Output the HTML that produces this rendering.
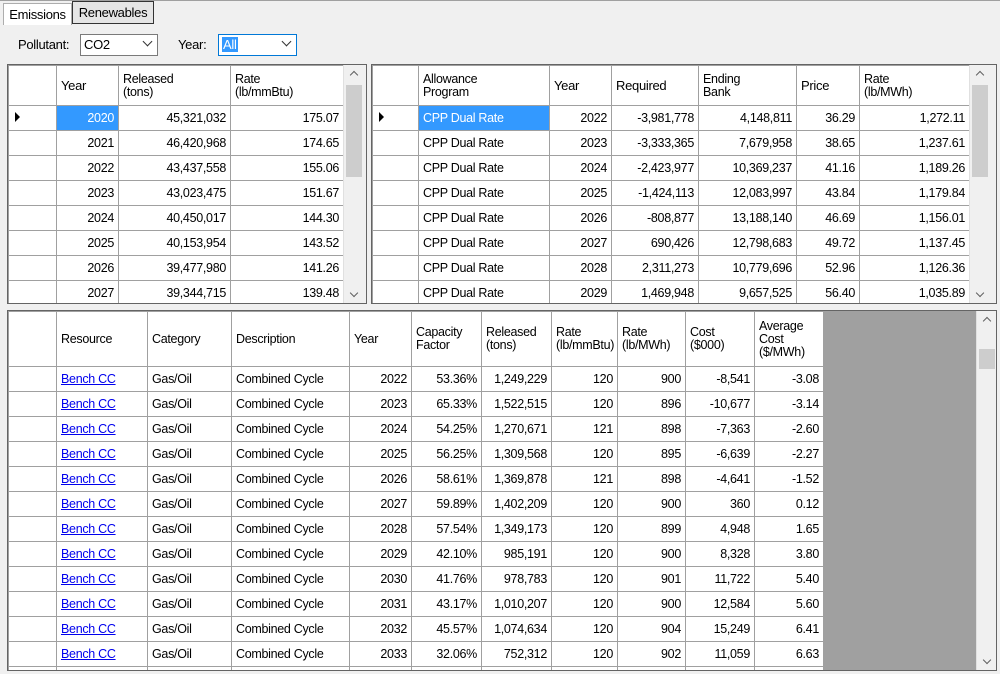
<!DOCTYPE html>
<html><head><style>
body{margin:0;width:1000px;height:674px;background:#f0f0f0;font-family:"Liberation Sans",sans-serif;font-size:12.5px;color:#000;position:relative;overflow:hidden;letter-spacing:-0.3px}
.abs{position:absolute}
.grid{position:absolute;border:1px solid #646464;background:#a0a0a0;overflow:hidden;box-sizing:border-box}
table{border-collapse:collapse;table-layout:fixed;background:#fff;position:absolute;left:0;top:0}
td{border:1px solid #a0a0a0;height:24px;padding:0 4px;white-space:nowrap;overflow:hidden;text-align:right}
td.l{text-align:left}
tr.h td{text-align:left;vertical-align:middle;line-height:13px}
td.rh{border-right:1px solid #a0a0a0;text-align:left}
.sel{background:#3399ff;color:#fff}
.sb{position:absolute;top:0;bottom:0;background:#f0f0f0;border-left:1px solid #e0e0e0}
.thumb{position:absolute;left:2px;width:16px;background:#cdcdcd}
.up,.dn{position:absolute;left:7px;width:5px;height:5px;border-left:1.5px solid #606060;border-top:1.5px solid #606060}
.up{top:7px;transform:rotate(45deg)}
.dn{bottom:7px;transform:rotate(225deg)}
a{color:#0000ee;text-decoration:underline}
.tri{display:inline-block;width:0;height:0;border-left:5px solid #000;border-top:5px solid transparent;border-bottom:5px solid transparent;margin-left:2px}
.combo{position:absolute;height:22px;background:#fff;border:1px solid #7a7a7a;box-sizing:border-box;font-size:13px;line-height:20px;padding-left:3px}
.combo .dd{position:absolute;right:6px;top:3px;width:6px;height:6px;border-right:1.5px solid #333;border-bottom:1.5px solid #333;transform:rotate(45deg)}
</style></head><body>
<div class="abs" style="left:0;top:0;width:1000px;height:1px;background:#a0a0a0"></div>
<div class="abs" style="left:3px;top:3px;width:67px;height:21px;background:#fff;border:1px solid #adadad;border-bottom:none;font-size:13px;line-height:21px;text-align:center">Emissions</div>
<div class="abs" style="left:72px;top:1px;width:80px;height:21px;background:#e5e5e5;border:1px solid #333;font-size:13px;line-height:21px;text-align:center">Renewables</div>
<div class="abs" style="left:18px;top:37px;font-size:13px">Pollutant:</div>
<div class="combo" style="left:80px;top:34px;width:78px">CO2<div class="dd"></div></div>
<div class="abs" style="left:178px;top:37px;font-size:13px">Year:</div>
<div class="combo" style="left:218px;top:34px;width:79px;border-color:#0078d7"><span style="background:#3399ff;color:#fff;padding:0 1px">All</span><div class="dd"></div></div>

<!-- top-left grid -->
<div class="grid" style="left:7px;top:64px;width:360px;height:240px">
<table style="width:335px">
<colgroup><col style="width:48px"><col style="width:62px"><col style="width:112px"><col style="width:113px"></colgroup>
<tr class="h" style="height:40px"><td></td><td style="font-size:13px">Year</td><td>Released<br>(tons)</td><td>Rate<br>(lb/mmBtu)</td></tr>
<tr><td class="rh"><span class="tri"></span></td><td class="sel">2020</td><td>45,321,032</td><td>175.07</td></tr>
<tr><td></td><td>2021</td><td>46,420,968</td><td>174.65</td></tr>
<tr><td></td><td>2022</td><td>43,437,558</td><td>155.06</td></tr>
<tr><td></td><td>2023</td><td>43,023,475</td><td>151.67</td></tr>
<tr><td></td><td>2024</td><td>40,450,017</td><td>144.30</td></tr>
<tr><td></td><td>2025</td><td>40,153,954</td><td>143.52</td></tr>
<tr><td></td><td>2026</td><td>39,477,980</td><td>141.26</td></tr>
<tr><td></td><td>2027</td><td>39,344,715</td><td>139.48</td></tr>
</table>
<div class="sb" style="left:335px;width:24px"><div class="up"></div><div class="thumb" style="top:20px;height:92px"></div><div class="dn"></div></div>
</div>

<!-- top-right grid -->
<div class="grid" style="left:371px;top:64px;width:626px;height:240px">
<table style="width:597px">
<colgroup><col style="width:46px"><col style="width:131px"><col style="width:62px"><col style="width:87px"><col style="width:98px"><col style="width:63px"><col style="width:110px"></colgroup>
<tr class="h" style="height:40px"><td></td><td>Allowance<br>Program</td><td style="font-size:13px">Year</td><td style="font-size:13px">Required</td><td>Ending<br>Bank</td><td style="font-size:13px">Price</td><td>Rate<br>(lb/MWh)</td></tr>
<tr><td class="rh"><span class="tri"></span></td><td class="l sel">CPP Dual Rate</td><td>2022</td><td>-3,981,778</td><td>4,148,811</td><td>36.29</td><td>1,272.11</td></tr>
<tr><td></td><td class="l">CPP Dual Rate</td><td>2023</td><td>-3,333,365</td><td>7,679,958</td><td>38.65</td><td>1,237.61</td></tr>
<tr><td></td><td class="l">CPP Dual Rate</td><td>2024</td><td>-2,423,977</td><td>10,369,237</td><td>41.16</td><td>1,189.26</td></tr>
<tr><td></td><td class="l">CPP Dual Rate</td><td>2025</td><td>-1,424,113</td><td>12,083,997</td><td>43.84</td><td>1,179.84</td></tr>
<tr><td></td><td class="l">CPP Dual Rate</td><td>2026</td><td>-808,877</td><td>13,188,140</td><td>46.69</td><td>1,156.01</td></tr>
<tr><td></td><td class="l">CPP Dual Rate</td><td>2027</td><td>690,426</td><td>12,798,683</td><td>49.72</td><td>1,137.45</td></tr>
<tr><td></td><td class="l">CPP Dual Rate</td><td>2028</td><td>2,311,273</td><td>10,779,696</td><td>52.96</td><td>1,126.36</td></tr>
<tr><td></td><td class="l">CPP Dual Rate</td><td>2029</td><td>1,469,948</td><td>9,657,525</td><td>56.40</td><td>1,035.89</td></tr>
</table>
<div class="sb" style="left:597px;width:28px"><div class="up"></div><div class="thumb" style="top:20px;height:92px"></div><div class="dn"></div></div>
</div>

<!-- bottom grid -->
<div class="grid" style="left:7px;top:310px;width:990px;height:361px">
<table style="width:815px">
<colgroup><col style="width:48px"><col style="width:91px"><col style="width:84px"><col style="width:118px"><col style="width:62px"><col style="width:70px"><col style="width:70px"><col style="width:66px"><col style="width:68px"><col style="width:69px"><col style="width:69px"></colgroup>
<tr class="h" style="height:55px"><td></td><td>Resource</td><td>Category</td><td>Description</td><td>Year</td><td>Capacity<br>Factor</td><td>Released<br>(tons)</td><td>Rate<br>(lb/mmBtu)</td><td>Rate<br>(lb/MWh)</td><td>Cost<br>($000)</td><td>Average<br>Cost<br>($/MWh)</td></tr>
<tr><td></td><td class="l"><a>Bench CC</a></td><td class="l">Gas/Oil</td><td class="l">Combined Cycle</td><td>2022</td><td>53.36%</td><td>1,249,229</td><td>120</td><td>900</td><td>-8,541</td><td>-3.08</td></tr>
<tr><td></td><td class="l"><a>Bench CC</a></td><td class="l">Gas/Oil</td><td class="l">Combined Cycle</td><td>2023</td><td>65.33%</td><td>1,522,515</td><td>120</td><td>896</td><td>-10,677</td><td>-3.14</td></tr>
<tr><td></td><td class="l"><a>Bench CC</a></td><td class="l">Gas/Oil</td><td class="l">Combined Cycle</td><td>2024</td><td>54.25%</td><td>1,270,671</td><td>121</td><td>898</td><td>-7,363</td><td>-2.60</td></tr>
<tr><td></td><td class="l"><a>Bench CC</a></td><td class="l">Gas/Oil</td><td class="l">Combined Cycle</td><td>2025</td><td>56.25%</td><td>1,309,568</td><td>120</td><td>895</td><td>-6,639</td><td>-2.27</td></tr>
<tr><td></td><td class="l"><a>Bench CC</a></td><td class="l">Gas/Oil</td><td class="l">Combined Cycle</td><td>2026</td><td>58.61%</td><td>1,369,878</td><td>121</td><td>898</td><td>-4,641</td><td>-1.52</td></tr>
<tr><td></td><td class="l"><a>Bench CC</a></td><td class="l">Gas/Oil</td><td class="l">Combined Cycle</td><td>2027</td><td>59.89%</td><td>1,402,209</td><td>120</td><td>900</td><td>360</td><td>0.12</td></tr>
<tr><td></td><td class="l"><a>Bench CC</a></td><td class="l">Gas/Oil</td><td class="l">Combined Cycle</td><td>2028</td><td>57.54%</td><td>1,349,173</td><td>120</td><td>899</td><td>4,948</td><td>1.65</td></tr>
<tr><td></td><td class="l"><a>Bench CC</a></td><td class="l">Gas/Oil</td><td class="l">Combined Cycle</td><td>2029</td><td>42.10%</td><td>985,191</td><td>120</td><td>900</td><td>8,328</td><td>3.80</td></tr>
<tr><td></td><td class="l"><a>Bench CC</a></td><td class="l">Gas/Oil</td><td class="l">Combined Cycle</td><td>2030</td><td>41.76%</td><td>978,783</td><td>120</td><td>901</td><td>11,722</td><td>5.40</td></tr>
<tr><td></td><td class="l"><a>Bench CC</a></td><td class="l">Gas/Oil</td><td class="l">Combined Cycle</td><td>2031</td><td>43.17%</td><td>1,010,207</td><td>120</td><td>900</td><td>12,584</td><td>5.60</td></tr>
<tr><td></td><td class="l"><a>Bench CC</a></td><td class="l">Gas/Oil</td><td class="l">Combined Cycle</td><td>2032</td><td>45.57%</td><td>1,074,634</td><td>120</td><td>904</td><td>15,249</td><td>6.41</td></tr>
<tr><td></td><td class="l"><a>Bench CC</a></td><td class="l">Gas/Oil</td><td class="l">Combined Cycle</td><td>2033</td><td>32.06%</td><td>752,312</td><td>120</td><td>902</td><td>11,059</td><td>6.63</td></tr>
<tr><td></td><td></td><td></td><td></td><td></td><td></td><td></td><td></td><td></td><td></td><td></td></tr>
</table>
<div class="sb" style="left:968px;width:21px"><div class="up"></div><div class="thumb" style="top:38px;height:20px"></div><div class="dn"></div></div>
</div>
</body></html>
